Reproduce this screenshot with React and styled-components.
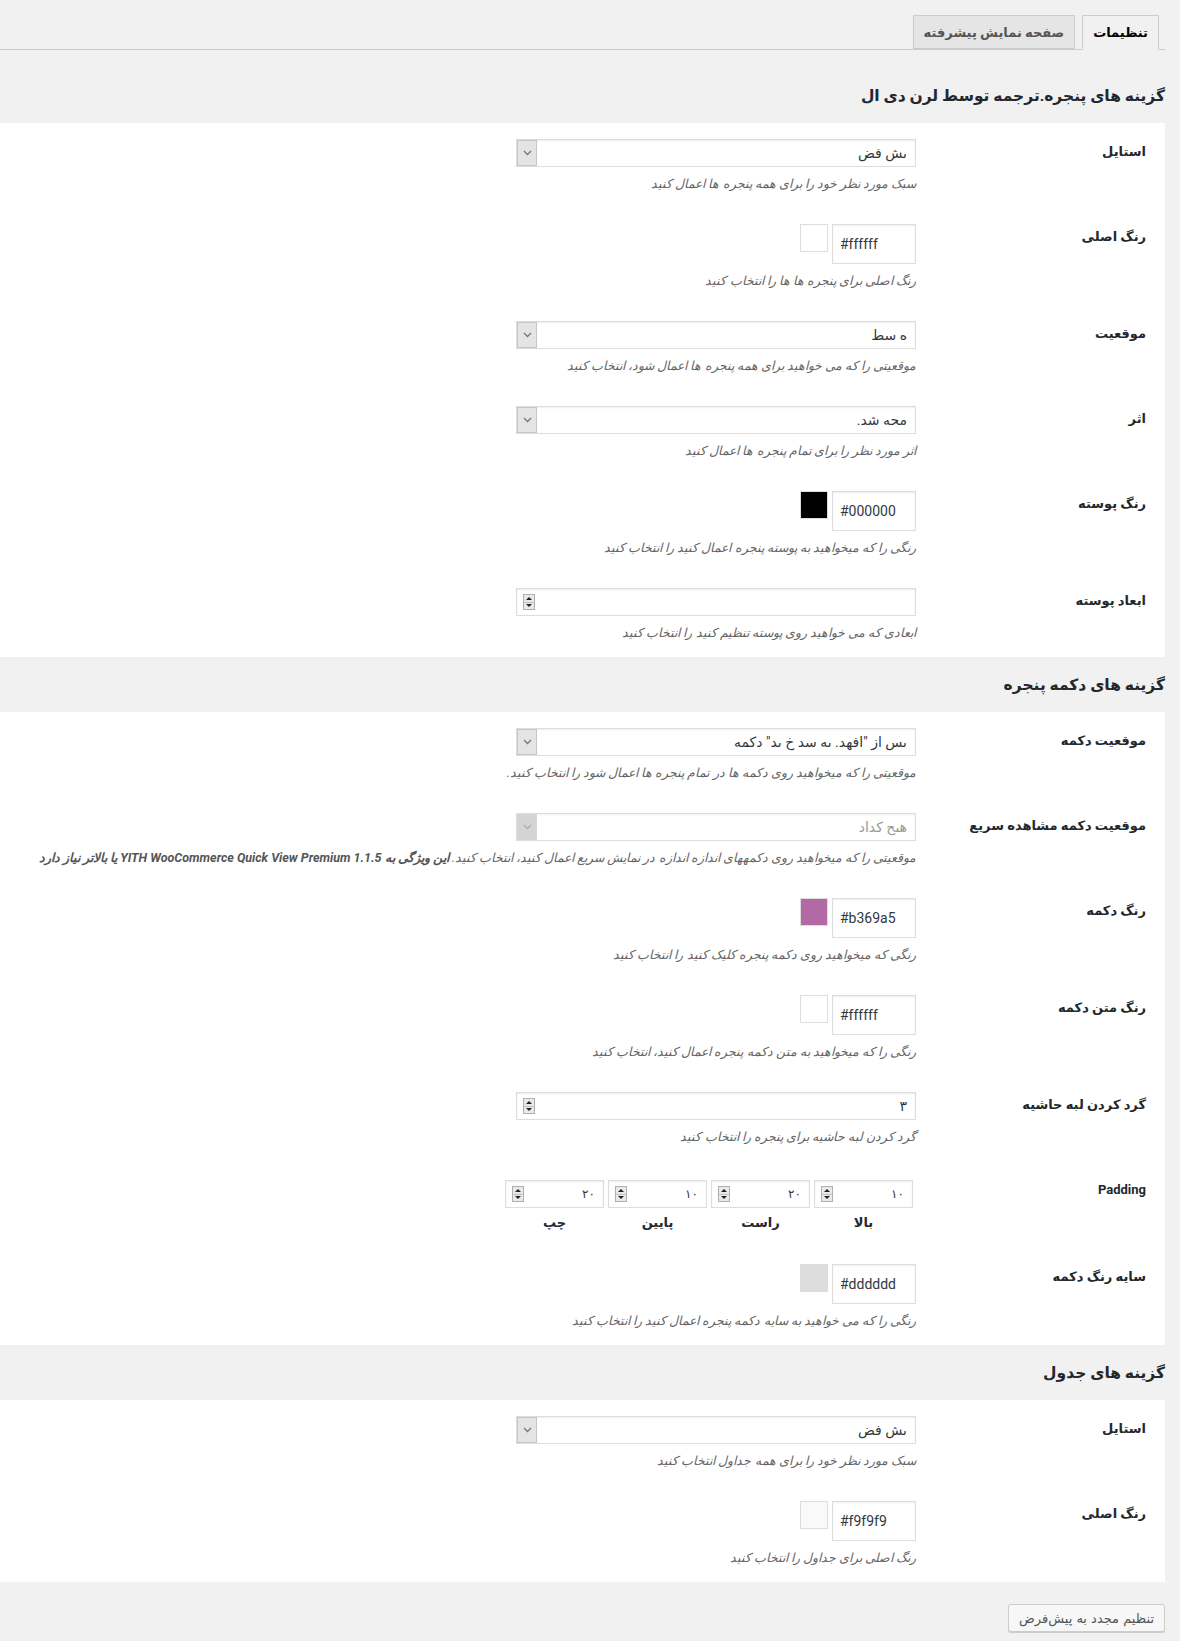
import React from "react";
import styled, { createGlobalStyle } from "styled-components";

const GlobalStyle = createGlobalStyle`
  body {
    margin: 0;
    background: #f1f1f1;
    font-family: Roboto, "DejaVu Sans", sans-serif;
    color: #23282d;
  }
`;

const Page = styled.div`
  direction: rtl;
  padding: 0 15px 11px 0;
`;

const TabBar = styled.div`
  display: flex;
  gap: 7px;
  padding: 15px 6px 0 0;
  border-bottom: 1px solid #ccc;
`;

const Tab = styled.div`
  box-sizing: border-box;
  padding: 0 10px;
  display: flex;
  align-items: center;
  border: 1px solid #ccc;
  margin-bottom: -1px;
  font-size: 13px;
  font-weight: 700;
  background: ${(p) => (p.active ? "#f1f1f1" : "#e5e5e5")};
  border-bottom-color: ${(p) => (p.active ? "#f1f1f1" : "#ccc")};
  height: ${(p) => (p.active ? "35px" : "34px")};
  color: ${(p) => (p.active ? "#000" : "#555")};
`;

const SectionTitle = styled.h2`
  margin: ${(p) => (p.first ? "18px" : "0")} 0 0;
  height: 55px;
  display: flex;
  align-items: center;
  font-size: 15.5px;
  font-weight: 700;
  color: #23282d;
`;

const Panel = styled.div`
  background: #fff;
`;

const Row = styled.div`
  display: flex;
  padding: 16px 0 15px;
`;

const Label = styled.div`
  width: 249px;
  flex-shrink: 0;
  box-sizing: border-box;
  padding: 4px 19px 0 0;
  font-size: 13px;
  line-height: 18px;
  font-weight: 700;
  color: #23282d;
`;

const Field = styled.div`
  flex: 1;
  min-width: 0;
`;

const Description = styled.p`
  margin: 8px 0 0;
  font-size: 12.5px;
  line-height: 18px;
  font-style: italic;
  color: #666;
  white-space: nowrap;
  b {
    font-weight: 700;
    color: #555;
  }
`;

const Box = styled.div`
  width: ${(p) => p.width || 400}px;
  height: ${(p) => p.height || 28}px;
  box-sizing: border-box;
  border: 1px solid #ddd;
  box-shadow: inset 0 1px 2px rgba(0, 0, 0, 0.07);
  background: #fff;
  display: flex;
  align-items: center;
  justify-content: space-between;
  padding-right: 8px;
  font-size: 14px;
  color: ${(p) => (p.disabled ? "#999" : "#32373c")};
`;

const SelectArrow = styled.div`
  width: 20px;
  height: 100%;
  box-sizing: border-box;
  border: 1px solid ${(p) => (p.disabled ? "#d6d6d6" : "#c6c6c6")};
  background: ${(p) => (p.disabled ? "#d4d4d4" : "#e4e4e4")};
  display: flex;
  align-items: center;
  justify-content: center;
  svg {
    opacity: ${(p) => (p.disabled ? 0.4 : 1)};
  }
`;

const Spinner = styled.div`
  width: 12px;
  height: 16px;
  margin-left: 6px;
  box-sizing: border-box;
  border: 1px solid #b0b0b0;
  background: #e9e9e9;
  display: flex;
  flex-direction: column;
`;

const SpinHalf = styled.div`
  flex: 1;
  display: flex;
  align-items: center;
  justify-content: center;
  border-top: ${(p) => (p.down ? "1px solid #c0c0c0" : "none")};
  &::before {
    content: "";
    border-left: 3px solid transparent;
    border-right: 3px solid transparent;
    ${(p) =>
      p.down ? "border-top: 3px solid #222;" : "border-bottom: 3px solid #222;"}
  }
`;

const ColorWrap = styled.div`
  display: flex;
  align-items: flex-start;
  gap: 4px;
`;

const ColorText = styled.div`
  width: 84px;
  height: 40px;
  box-sizing: border-box;
  border: 1px solid #ddd;
  box-shadow: inset 0 1px 2px rgba(0, 0, 0, 0.07);
  direction: ltr;
  display: flex;
  align-items: center;
  padding-left: 7px;
  font-size: 14px;
  color: #32373c;
`;

const Swatch = styled.div`
  width: 28px;
  height: 28px;
  box-sizing: border-box;
  border: 1px solid #ddd;
  background: ${(p) => p.color};
`;

const PaddingGrid = styled.div`
  display: flex;
  gap: 4px;
  margin: 3px 3px 1px 0;
`;

const PaddingCell = styled.div`
  width: 99px;
`;

const PaddingCaption = styled.div`
  margin-top: 6px;
  text-align: center;
  font-size: 13px;
  line-height: 18px;
  font-weight: 700;
  color: #23282d;
`;

const Footer = styled.div`
  display: flex;
  padding-top: 22px;
`;

const ResetButton = styled.button`
  height: 28px;
  padding: 0 10px;
  border: 1px solid #ccc;
  border-radius: 3px;
  background: #f7f7f7;
  box-shadow: 0 1px 0 #ccc;
  font-family: "DejaVu Sans", sans-serif;
  font-size: 13px;
  color: #555;
  cursor: pointer;
`;

const Chevron = () => (
  <svg width="9" height="6" viewBox="0 0 9 6">
    <polyline points="1,1 4.5,4.5 8,1" fill="none" stroke="#777" strokeWidth="1.3" />
  </svg>
);

const Select = ({ value, disabled }) => (
  <Box disabled={disabled}>
    <span>{value}</span>
    <SelectArrow disabled={disabled}>
      <Chevron />
    </SelectArrow>
  </Box>
);

const NumberInput = ({ value, width }) => (
  <Box width={width}>
    <span style={{ fontSize: width ? 12 : 14 }}>{value}</span>
    <Spinner>
      <SpinHalf />
      <SpinHalf down />
    </Spinner>
  </Box>
);

const ColorPicker = ({ color }) => (
  <ColorWrap>
    <ColorText>{color}</ColorText>
    <Swatch color={color} />
  </ColorWrap>
);

const Setting = ({ label, desc, children }) => (
  <Row>
    <Label>{label}</Label>
    <Field>
      {children}
      {desc && <Description>{desc}</Description>}
    </Field>
  </Row>
);

const paddings = [
  { label: "بالا", value: "۱۰" },
  { label: "راست", value: "۲۰" },
  { label: "پایین", value: "۱۰" },
  { label: "چپ", value: "۲۰" },
];

export default function App() {
  return (
    <Page>
      <GlobalStyle />
      <TabBar>
        <Tab active>تنظیمات</Tab>
        <Tab>صفحه نمایش پیشرفته</Tab>
      </TabBar>

      <SectionTitle first>گزینه های پنجره.ترجمه توسط لرن دی ال</SectionTitle>
      <Panel>
        <Setting label="استایل" desc="سبک مورد نظر خود را برای همه پنجره ها اعمال کنید">
          <Select value="ٮش  فض" />
        </Setting>
        <Setting label="رنگ اصلی" desc="رنگ اصلی برای پنجره ها ها را انتخاب کنید">
          <ColorPicker color="#ffffff" />
        </Setting>
        <Setting label="موقعیت" desc="موقعیتی را که می خواهید برای همه پنجره ها اعمال شود، انتخاب کنید">
          <Select value="ه سط" />
        </Setting>
        <Setting label="اثر" desc="اثر مورد نظر را برای تمام پنجره ها اعمال کنید">
          <Select value="محه شد." />
        </Setting>
        <Setting label="رنگ پوسته" desc="رنگی را که میخواهید به پوسته پنجره اعمال کنید را انتخاب کنید">
          <ColorPicker color="#000000" />
        </Setting>
        <Setting label="ابعاد پوسته" desc="ابعادی که می خواهید روی پوسته تنظیم کنید را انتخاب کنید">
          <NumberInput value="" />
        </Setting>
      </Panel>

      <SectionTitle>گزینه های دکمه پنجره</SectionTitle>
      <Panel>
        <Setting label="موقعیت دکمه" desc="موقعیتی را که میخواهید روی دکمه ها در تمام پنجره ها اعمال شود را انتخاب کنید.">
          <Select value={'ٮس  از "افهد. ٮه سد خ ٮد" دکمه'} />
        </Setting>
        <Setting
          label="موقعیت دکمه مشاهده سریع"
          desc={
            <>
              موقعیتی را که میخواهید روی دکمههای اندازه اندازه در نمایش سریع اعمال کنید، انتخاب کنید.{" "}
              <b>این ویژگی به YITH WooCommerce Quick View Premium 1.1.5 یا بالاتر نیاز دارد</b>
            </>
          }
        >
          <Select value="هىح كداد" disabled />
        </Setting>
        <Setting label="رنگ دکمه" desc="رنگی که میخواهید روی دکمه پنجره کلیک کنید را انتخاب کنید">
          <ColorPicker color="#b369a5" />
        </Setting>
        <Setting label="رنگ متن دکمه" desc="رنگی را که میخواهید به متن دکمه پنجره اعمال کنید، انتخاب کنید">
          <ColorPicker color="#ffffff" />
        </Setting>
        <Setting label="گرد کردن لبه حاشیه" desc="گرد کردن لبه حاشیه برای پنجره را انتخاب کنید">
          <NumberInput value="۳" />
        </Setting>
        <Setting label="Padding">
          <PaddingGrid>
            {paddings.map((p) => (
              <PaddingCell key={p.label}>
                <NumberInput value={p.value} width={99} />
                <PaddingCaption>{p.label}</PaddingCaption>
              </PaddingCell>
            ))}
          </PaddingGrid>
        </Setting>
        <Setting label="سایه رنگ دکمه" desc="رنگی را که می خواهید به سایه دکمه پنجره اعمال کنید را انتخاب کنید">
          <ColorPicker color="#dddddd" />
        </Setting>
      </Panel>

      <SectionTitle>گزینه های جدول</SectionTitle>
      <Panel>
        <Setting label="استایل" desc="سبک مورد نظر خود را برای همه جداول انتخاب کنید">
          <Select value="ٮش  فض" />
        </Setting>
        <Setting label="رنگ اصلی" desc="رنگ اصلی برای جداول را انتخاب کنید">
          <ColorPicker color="#f9f9f9" />
        </Setting>
      </Panel>

      <Footer>
        <ResetButton>تنظیم مجدد به پیش‌فرض</ResetButton>
      </Footer>
    </Page>
  );
}
